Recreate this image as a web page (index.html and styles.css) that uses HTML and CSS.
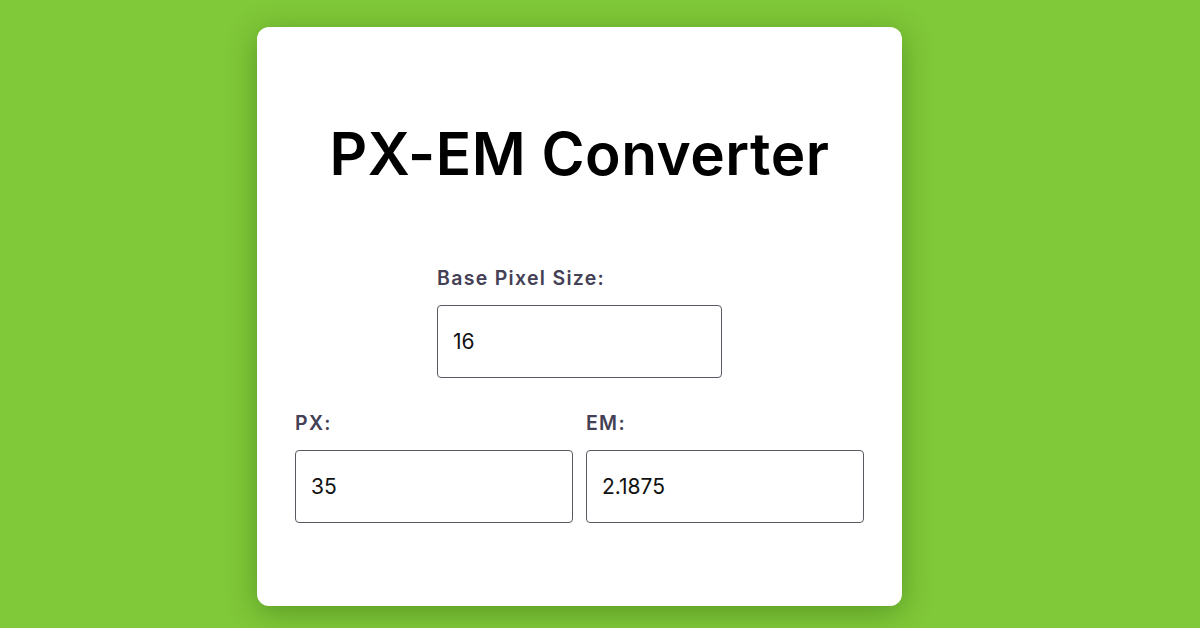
FILE: index.html
```html
<!DOCTYPE html>
<html>
<head>
<meta charset="utf-8">
<link rel="stylesheet" href="styles.css">
</head>
<body>
<div class="page">
  <div class="card">
    <h1 class="title">PX-EM Converter</h1>
    <div class="base">
      <label class="label">Base Pixel Size:</label>
      <input class="field" type="text" value="16">
    </div>
    <div class="row">
      <div class="col">
        <label class="label">PX:</label>
        <input class="field" type="text" value="35">
      </div>
      <div class="col">
        <label class="label">EM:</label>
        <input class="field" type="text" value="2.1875">
      </div>
    </div>
  </div>
</div>
</body>
</html>
```
FILE: styles.css
```css
* { box-sizing: border-box; }
html, body { margin: 0; padding: 0; }
body {
  width: 1200px;
  height: 628px;
  overflow: hidden;
  background: #80c939;
  font-family: "Inter", "Noto Sans", sans-serif;
}
.page {
  display: flex;
  justify-content: center;
  padding-top: 27px;
  padding-right: 41px;
}
.card {
  width: 645px;
  height: 579px;
  background: #ffffff;
  border-radius: 12px;
  box-shadow: 0 6px 30px rgba(40, 90, 10, 0.45);
  padding: 0 38px;
  display: flex;
  flex-direction: column;
  align-items: center;
}
.title {
  margin: 82px 0 0 0;
  font-size: 58.5px;
  font-weight: 600;
  line-height: 90px;
  color: #000;
  letter-spacing: 0.5px;
}
.base {
  margin-top: 67px;
  width: 285px;
  display: flex;
  flex-direction: column;
}
.label {
  font-size: 19.5px;
  font-weight: 600;
  color: #444055;
  line-height: 24px;
  margin-bottom: 15px;
  letter-spacing: 1.3px;
}
.field {
  height: 73px;
  width: 100%;
  border: 1px solid #5a5a62;
  border-radius: 4px;
  padding: 0 15px;
  font-family: "Inter", "Noto Sans", sans-serif;
  font-size: 21px;
  color: #111;
  background: #fff;
  outline: none;
}
.row {
  margin-top: 33px;
  width: 100%;
  display: flex;
  gap: 13px;
}
.col {
  flex: 1;
  display: flex;
  flex-direction: column;
}
```
